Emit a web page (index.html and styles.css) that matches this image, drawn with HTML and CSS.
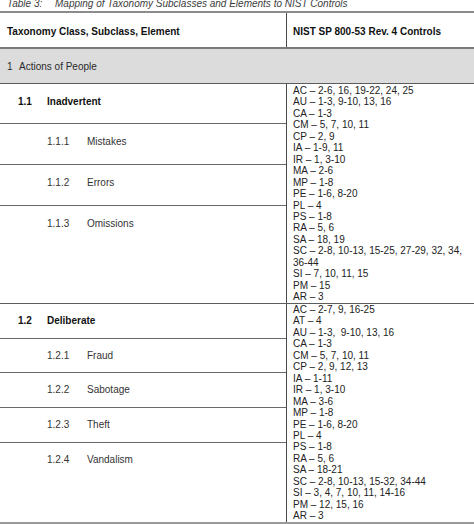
FILE: index.html
```html
<!DOCTYPE html>
<html lang="en">
<head>
<meta charset="utf-8">
<title>Table 3 – Mapping of Taxonomy Subclasses and Elements to NIST Controls</title>
<link rel="stylesheet" href="styles.css">
</head>
<body>
<div class="caption"><span class="cap-label">Table 3:</span>Mapping of Taxonomy Subclasses and Elements to NIST Controls</div>
<div class="table">
  <div class="head">
    <div class="cell-left">Taxonomy Class, Subclass, Element</div>
    <div class="cell-right">NIST SP 800-53 Rev. 4 Controls</div>
  </div>
  <div class="class-row"><span class="n1">1</span>Actions of People</div>

  <div class="group g1">
    <div class="left">
      <div class="row subclass r-a"><span class="n2">1.1</span>Inadvertent</div>
      <div class="row element r-b"><span class="n3">1.1.1</span>Mistakes</div>
      <div class="row element r-b"><span class="n3">1.1.2</span>Errors</div>
      <div class="row element last"><span class="n3">1.1.3</span>Omissions</div>
    </div>
    <div class="right">
      <div>AC – 2-6, 16, 19-22, 24, 25</div>
      <div>AU – 1-3, 9-10, 13, 16</div>
      <div>CA – 1-3</div>
      <div>CM – 5, 7, 10, 11</div>
      <div>CP – 2, 9</div>
      <div>IA – 1-9, 11</div>
      <div>IR – 1, 3-10</div>
      <div>MA – 2-6</div>
      <div>MP – 1-8</div>
      <div>PE – 1-6, 8-20</div>
      <div>PL – 4</div>
      <div>PS – 1-8</div>
      <div>RA – 5, 6</div>
      <div>SA – 18, 19</div>
      <div>SC – 2-8, 10-13, 15-25, 27-29, 32, 34, 36-44</div>
      <div>SI – 7, 10, 11, 15</div>
      <div>PM – 15</div>
      <div>AR – 3</div>
    </div>
  </div>

  <div class="group g2">
    <div class="left">
      <div class="row subclass r-c"><span class="n2">1.2</span>Deliberate</div>
      <div class="row element r-d"><span class="n3">1.2.1</span>Fraud</div>
      <div class="row element r-c"><span class="n3">1.2.2</span>Sabotage</div>
      <div class="row element r-c"><span class="n3">1.2.3</span>Theft</div>
      <div class="row element last"><span class="n3">1.2.4</span>Vandalism</div>
    </div>
    <div class="right">
      <div>AC – 2-7, 9, 16-25</div>
      <div>AT – 4</div>
      <div>AU – 1-3,&nbsp; 9-10, 13, 16</div>
      <div>CA – 1-3</div>
      <div>CM – 5, 7, 10, 11</div>
      <div>CP – 2, 9, 12, 13</div>
      <div>IA – 1-11</div>
      <div>IR – 1, 3-10</div>
      <div>MA – 3-6</div>
      <div>MP – 1-8</div>
      <div>PE – 1-6, 8-20</div>
      <div>PL – 4</div>
      <div>PS – 1-8</div>
      <div>RA – 5, 6</div>
      <div>SA – 18-21</div>
      <div>SC – 2-8, 10-13, 15-32, 34-44</div>
      <div>SI – 3, 4, 7, 10, 11, 14-16</div>
      <div>PM – 12, 15, 16</div>
      <div>AR – 3</div>
    </div>
  </div>
</div>
</body>
</html>
```

FILE: styles.css
```css
* {
  box-sizing: border-box;
}

html, body {
  margin: 0;
  padding: 0;
  background: #ffffff;
}

body {
  width: 474px;
  height: 524px;
  overflow: hidden;
  font-family: "Liberation Sans", Arial, sans-serif;
  font-size: 10px;
  line-height: 11.45px;
  color: #1e1e1e;
}

.caption {
  height: 13px;
  margin-top: -2px;
  padding-left: 7px;
  font-style: italic;
  color: #3c3c3c;
  white-space: nowrap;
}

.cap-label {
  display: inline-block;
  width: 48px;
}

.table {
  width: 474px;
  border-top: 2px solid #8c8c8c;
  border-bottom: 2px solid #9a9a9a;
}

.head {
  display: grid;
  grid-template-columns: 287px 1fr;
  height: 36px;
  border-bottom: 2px solid #7a7a7a;
  font-weight: bold;
  color: #111;
}

.head .cell-left {
  padding: 13px 0 0 7px;
  border-right: 1px solid #4a4a4a;
}

.head .cell-right {
  padding: 13px 0 0 6px;
}

.class-row {
  height: 35px;
  padding: 12px 0 0 7px;
  background: #dcdcdc;
  border-bottom: 1px solid #5c5c5c;
  color: #2a2a2a;
}

.n1 {
  display: inline-block;
  width: 12px;
}

.group {
  display: grid;
  grid-template-columns: 287px 1fr;
}

.g1 {
  height: 220px;
  border-bottom: 1px solid #5c5c5c;
}

.g2 {
  height: 218px;
}

.left {
  display: flex;
  flex-direction: column;
  border-right: 1px solid #4a4a4a;
}

.row {
  border-bottom: 1px solid #6a6a6a;
}

.row.last {
  flex: 1;
  border-bottom: none;
}

.g1 .row {
  padding-top: 12px;
}

.g2 .row {
  padding-top: 11px;
}

.r-a { height: 40px; }
.r-b { height: 41px; }
.r-c { height: 35px; }
.r-d { height: 34px; }

.subclass {
  padding-left: 18px;
  font-weight: bold;
  color: #111;
}

.n2 {
  display: inline-block;
  width: 29px;
}

.element {
  padding-left: 47px;
  color: #333;
}

.n3 {
  display: inline-block;
  width: 40px;
}

.right {
  padding: 1px 5px 0 6px;
  color: #222;
}

.g2 .right {
  padding-top: 0;
}
```
